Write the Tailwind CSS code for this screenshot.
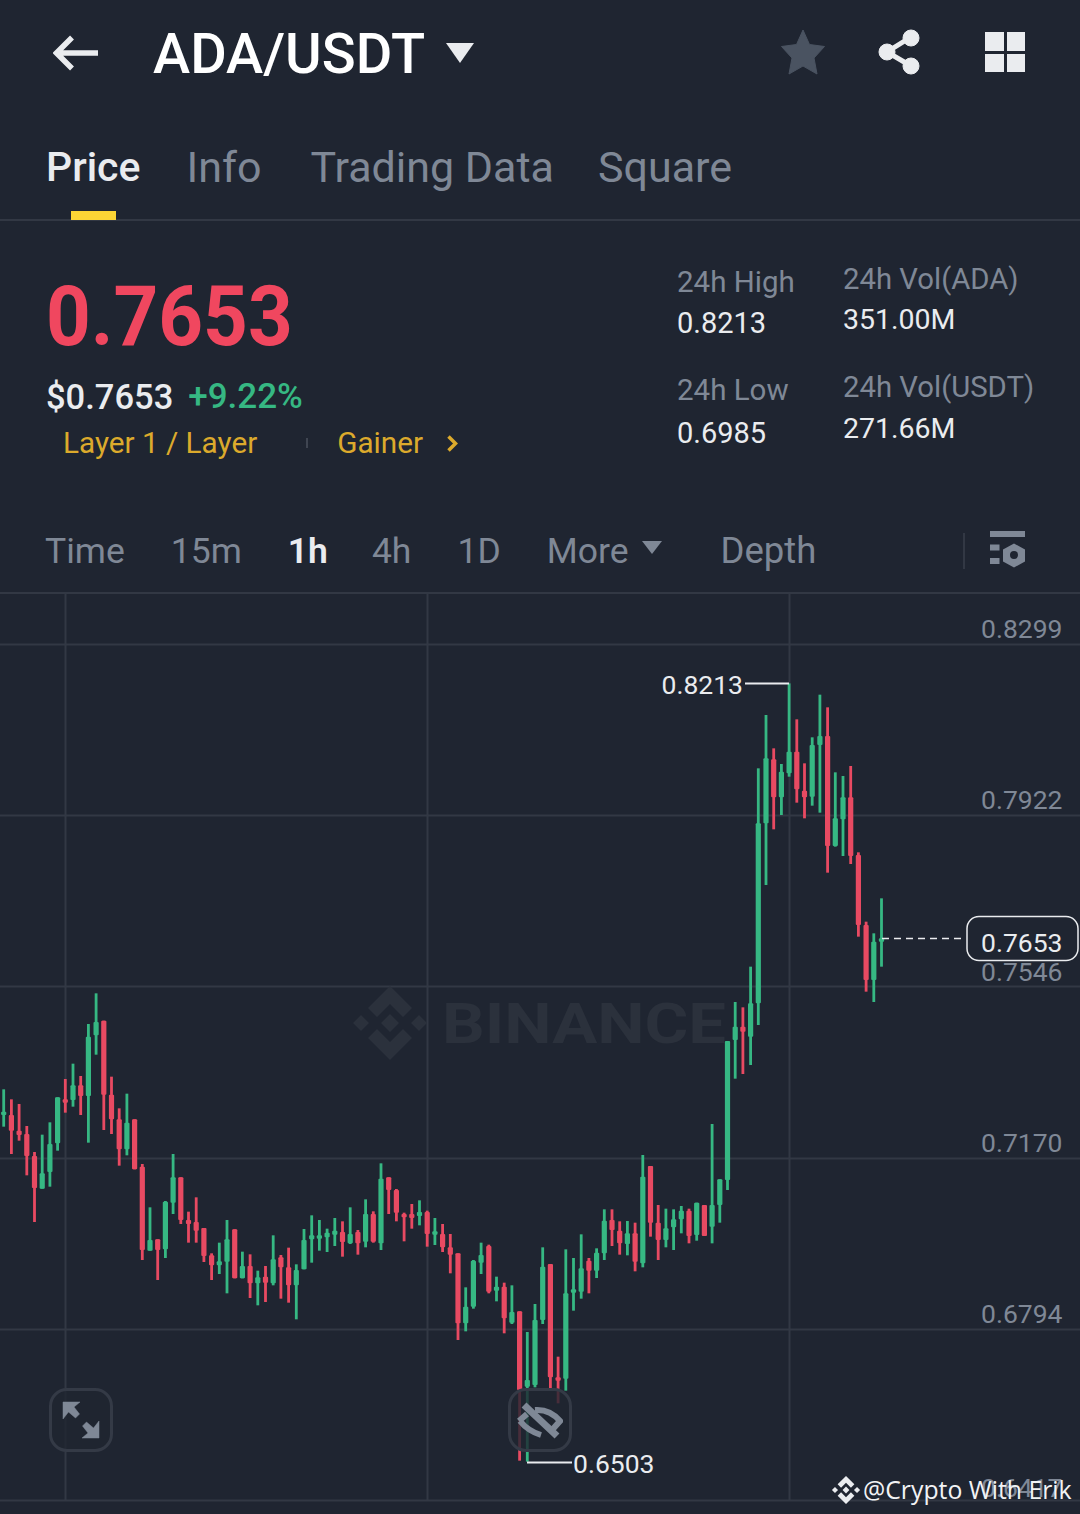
<!DOCTYPE html>
<html lang="en">
<head>
    <meta charset="UTF-8">
    <meta name="viewport" content="width=device-width, initial-scale=1.0">
    <title>ADA/USDT</title>
    <script src="https://cdn.jsdelivr.net/npm/@tailwindcss/browser@4"></script>
</head>
<body class="bg-[#1f2531]">
<div class="w-[1080px] h-[1514px] overflow-hidden bg-[#1f2531] font-['Roboto',sans-serif] text-[#7f8896]">

    <!-- top bar -->
    <header class="h-[105px] flex items-center pl-[53px]">
        <svg width="45" height="36" viewBox="0 0 45 36" fill="none" stroke="#eaecef" stroke-width="5.500"><path d="M45 18H4M19 2.500 3.500 18 19 33.500"/></svg>
        <h1 class="ml-[55px] mt-[3px] text-[56px] leading-none font-medium text-white">ADA/USDT</h1>
        <svg class="ml-[21px]" width="28" height="20" viewBox="0 0 28 20"><path d="M0 0h28L14 20z" fill="#eaecef"/></svg>
        <svg class="ml-[307px] -mt-[1px]" width="44" height="46" viewBox="0 0 44 46"><path d="M22 1 28.500 15.500 43.500 17.500 33 29 36 45 22 37 8 45 11 29 .5 17.500 15.500 15.500z" fill="#4a5361" stroke="#4a5361" stroke-linejoin="round"/></svg>
        <svg class="ml-[53px] -mt-[1px]" width="42" height="46" viewBox="0 0 42 46" fill="#eaecef" stroke="#eaecef"><path d="M33 8 9 23l24 14" fill="none" stroke-width="5"/><circle cx="33" cy="9" r="8"/><circle cx="9" cy="23" r="8"/><circle cx="33" cy="37" r="8"/></svg>
        <div class="ml-[65px] -mt-[1px] grid grid-cols-2 gap-[3px] w-[40px] h-[40px]">
            <div class="bg-[#eaecef]"></div><div class="bg-[#eaecef]"></div>
            <div class="bg-[#eaecef]"></div><div class="bg-[#eaecef]"></div>
        </div>
    </header>

    <!-- tabs -->
    <nav class="h-[116px] border-b-2 border-[#323844] flex pl-[46px] gap-[46px] text-[43px] leading-[48px] pt-[38px] relative">
        <a class="relative text-[#eaecef] font-medium text-[41px]">Price<span class="absolute left-[25px] top-[68px] w-[45px] h-[9px] bg-[#fcd535]"></span></a>
        <a>Info</a>
        <a class="ml-[3px]">Trading Data</a>
        <a class="-ml-[2px]">Square</a>
    </nav>

    <!-- price and 24h stats -->
    <section class="h-[284px] flex">
        <div class="w-[677px] pl-[46px]">
            <div class="mt-[56px] text-[84px] leading-[80px] font-bold text-[#f0475f] origin-left scale-x-[.93]">0.7653</div>
            <div class="mt-[20px] flex items-center text-[34.500px] leading-[40px] font-medium">
                <span class="text-[#eaecef]">$0.7653</span>
                <span class="ml-[15px] text-[#36b883] text-[35px]">+9.22%</span>
            </div>
            <div class="mt-[8px] ml-[17px] flex items-center text-[29.700px] leading-[36px] text-[#dcaa2c]">
                <span>Layer 1 / Layer</span>
                <span class="ml-[49px] w-[2px] h-[10px] bg-[#3f4551]"></span>
                <span class="ml-[29px]">Gainer</span>
                <svg class="ml-[24px]" width="11" height="17" viewBox="0 0 11 17" fill="none" stroke="#dcaa2c" stroke-width="3.500"><path d="m1.500 1.500 7 7-7 7"/></svg>
            </div>
        </div>
        <div class="w-[166px] pt-[43px] text-[29.500px] leading-[36px]">
            <div>24h High</div>
            <div class="mt-[5px] text-[#eaecef] text-[29px]">0.8213</div>
            <div class="mt-[31px]">24h Low</div>
            <div class="mt-[7px] text-[#eaecef] text-[29px]">0.6985</div>
        </div>
        <div class="pt-[40px] text-[29.300px] leading-[36px]">
            <div>24h Vol(ADA)</div>
            <div class="mt-[5px] text-[#eaecef] text-[28.500px]">351.00M</div>
            <div class="mt-[31px]">24h Vol(USDT)</div>
            <div class="mt-[6px] text-[#eaecef] text-[28.500px]">271.66M</div>
        </div>
    </section>

    <!-- intervals -->
    <div class="h-[89px] border-b-2 border-[#323844] flex items-center pl-[45px] pt-[6px] text-[35.500px] leading-none">
        <span>Time</span>
        <span class="ml-[46px]">15m</span>
        <span class="ml-[46px] font-semibold text-[#eaecef]">1h</span>
        <span class="ml-[44px]">4h</span>
        <span class="ml-[46px]">1D</span>
        <span class="ml-[46px]">More</span>
        <svg class="ml-[14px] -mt-[9px]" width="20" height="13" viewBox="0 0 20 13"><path d="M0 0h20L10 13z" fill="#7f8896"/></svg>
        <span class="ml-[58px] text-[36.500px]">Depth</span>
        <span class="ml-[147px] -mt-[2px] w-[2px] h-[36px] bg-[#323844]"></span>
        <svg class="ml-[24px] -mt-[4px]" width="38" height="37" viewBox="990 530 38 37" fill="#7f8896">
            <path d="M991 530h35v6h-35zM991 543.500h9.500v6H991zM991 557h9.500v6H991z"/>
            <path fill-rule="evenodd" d="m1015 542.500 11 6v12l-11 6-11-6v-12zm0 7.500a4 4 0 1 0 0 8 4 4 0 0 0 0-8z"/>
        </svg>
    </div>

    <!-- chart -->
    <div class="relative h-[920px]">
        <svg id="chart" class="absolute inset-0" width="1080" height="920" viewBox="0 594 1080 920">
            <g stroke="#323844" stroke-width="2">
                <path d="M0 644.500H1080M0 815.500H1080M0 986.500H1080M0 1158.500H1080M0 1329.500H1080M0 1500.500H1080"/>
                <path d="M65.500 594V1500M427.500 594V1500M789.500 594V1500"/>
            </g>
            <!-- big watermark -->
            <g fill="#2b313c">
                <g transform="translate(390 1023)">
                    <path d="M0-37 22-15 13-6 0-19-13-6-22-15zM0 37-22 15-13 6 0 19 13 6 22 15zM-29-8-21 0-29 8-37 0zM29-8 37 0 29 8 21 0zM0-9 9 0 0 9-9 0z"/>
                </g>
                <text x="442" y="1043" font-size="56" font-weight="700" textLength="284" lengthAdjust="spacingAndGlyphs">BINANCE</text>
            </g>
            <g id="candles"></g>
            <!-- axis labels -->
            <g fill="#7f8896" font-size="26.500" text-anchor="end">
                <text x="1062.500" y="638">0.8299</text>
                <text x="1062.500" y="809">0.7922</text>
                <text x="1062.500" y="981">0.7546</text>
                <text x="1062.500" y="1152">0.7170</text>
                <text x="1062.500" y="1323">0.6794</text>
                <text x="1062.500" y="1497">0.6417</text>
            </g>
            <!-- high, low -->
            <g stroke="#eaecef" stroke-width="2" fill="none">
                <path d="M745 683.500H789M527 1462.500H572"/>
                <path d="M882 938.500H963" stroke-dasharray="7 5" stroke-width="1.500"/>
            </g>
            <g fill="#eaecef" font-size="26.500">
                <text x="661.500" y="694">0.8213</text>
                <text x="573" y="1473">0.6503</text>
            </g>
            <!-- last price -->
            <rect x="967" y="916.500" width="111" height="44" rx="12" fill="#1f2531" stroke="#eaecef" stroke-width="1.500"/>
            <text x="1062.500" y="952" fill="#eaecef" font-size="26.500" text-anchor="end">0.7653</text>
            <!-- small credit -->
            <g transform="translate(846 1490) scale(.38)" fill="#eaecef"><path d="M0-37 22-15 13-6 0-19-13-6-22-15zM0 37-22 15-13 6 0 19 13 6 22 15zM-29-8-21 0-29 8-37 0zM29-8 37 0 29 8 21 0zM0-9 9 0 0 9-9 0z"/></g>
            <text x="863" y="1499" fill="#f2f3f5" font-size="24.800" class="font-['Open_Sans',sans-serif]">@Crypto With Erik</text>
        </svg>

        <!-- buttons over the chart -->
        <button class="absolute left-[49px] top-[794px] w-[64px] h-[64px] rounded-[18px] border-[3px] border-[#343a46] bg-[#1f2531]/80 flex items-center justify-center">
            <svg width="38" height="38" viewBox="62 1401 38 38" fill="#7f8896" stroke="#7f8896"><path d="M63 1402h17l-6 5 5.500 7-4 4-7-6-5.500 7zM99 1438H82l6-5-5.500-7 4-4 7 6 5.500-7z" stroke-width=".5"/></svg>
        </button>
        <button class="absolute left-[508px] top-[794px] w-[64px] h-[64px] rounded-[18px] border-[3px] border-[#343a46] bg-[#1f2531]/80 flex items-center justify-center">
            <svg width="46" height="38" viewBox="517 1401 46 38" fill="none" stroke="#7f8896" stroke-width="6"><path d="m524 1405 33 31" stroke-width="7"/><path d="M535 1410q15-1 25 11l-8 9"/><path d="M519 1421l8-7M520 1421q8 10 21 14"/></svg>
        </button>
    </div>
</div>

<script>
    // [up, wick top, wick bottom, body top, body bottom], y read off crops starting at `base`, 3 units per px
    const G = 1, R = 0;
    const groups = [
        [980, [
            [G,328,440,395,405],[R,358,522,405,452],[R,372,482,452,465],[R,438,586,462,528],[R,516,726,528,624],
            [G,464,626,580,626],[G,427,620,492,576],[G,352,512,352,490],[R,297,398,358,368],[G,251,380,316,360],
            [R,288,405,316,348],[G,132,488,170,348],[G,40,224,126,166],[R,122,450,122,344],[R,290,462,344,418],
            [R,385,557,418,508],[G,341,526,428,508],[R,418,568,418,568],[R,552,840,560,810],[G,682,812,780,812],
            [R,778,900,778,810],[G,663,834,665,808],[G,522,702,592,668],[R,592,732,592,720],[R,695,788,720,732],
            [R,652,788,726,752],[R,744,846,744,828],[R,820,900,826,856],[G,788,882,844,856],[G,720,940,778,845],
            [R,748,895,748,895],[G,815,895,858,895],[R,823,954,858,910],[G,872,976,892,910],[R,858,966,890,908],
            [G,766,916,838,910],[R,825,956,832,862],[R,803,968,862,916],[G,853,1018,870,916],[G,747,868,780,868],
            [G,706,848,766,778],[G,720,812,766,776],[G,746,816,758,772],[G,714,798,752,764],[R,724,830,756,786],
            [G,682,792,762,790],[R,750,824,756,790]
        ]],
        [1140, [
            [G,178,322,222,305],[R,214,308,222,305],[G,70,330,116,310],[R,112,222,112,150],[R,147,244,150,218],
            [R,218,304,222,232],[R,192,266,222,234],[G,181,256,216,228],[R,212,320,216,282],[G,234,315,274,284],
            [R,252,336,282,322],[R,282,400,322,344],[R,340,600,340,550],[G,442,574,500,550],[G,360,506,362,500],
            [G,308,402,345,368],[R,314,460,318,455],[G,410,484,440,452],[R,428,580,440,535],[G,436,552,516,548],
            [R,514,962,514,750],[G,576,965,720,740],[G,492,742,540,735],[G,322,552,380,540],[R,372,745,372,712],
            [R,650,790,712,722],[G,328,752,460,716],[G,354,512,448,458],[G,283,476,385,455],[R,354,460,362,392],
            [G,325,414,338,392],[G,208,360,242,340],[R,208,318,240,270],[R,244,344,272,310],[G,243,346,280,312],
            [R,248,394,280,365],[G,45,382,110,370],[R,78,290,78,248],[R,195,360,248,300],[G,206,322,265,300],
            [G,208,330,238,262],[G,198,280,212,238],[R,206,310,212,288],[G,188,302,188,285]
        ]],
        [990, [
            [R,645,738,645,738],[G,402,760,645,710],[G,568,698,568,645],[G,153,600,153,570],[G,36,266,110,150],
            [R,52,252,110,125]
        ]],
        [660, [
            [G,920,1215,1030,1130],[G,325,1095,490,1030],[G,165,675,295,490],[R,265,508,298,412],[G,312,465,335,412],
            [G,70,350,275,340],[R,178,428,275,388],[R,310,475,392,412],[G,232,437,255,410],[G,104,458,228,255],
            [R,142,638,228,558],[G,337,560,475,558],[G,348,588,412,478],[R,318,612,412,588],[R,577,830,585,795],
            [R,785,995,795,960],[G,820,1026,845,960],[G,715,920,835,845]
        ]]
    ];

    let html = "";
    let i = 0;
    groups.forEach(([base, rows]) => {
        rows.forEach(([up, hi, lo, top, bottom]) => {
            const x = 3.7 + 7.7 * i;
            const fill = up ? "#36b883" : "#e84a62";
            const y = v => base + v / 3;
            html += `<rect x="${x - 1.4}" y="${y(hi)}" width="2.8" height="${(lo - hi) / 3}" fill="${fill}"/>`;
            html += `<rect x="${x - 2.6}" y="${y(top)}" width="5.2" height="${Math.max((bottom - top) / 3, 2)}" rx="1" fill="${fill}"/>`;
            i++;
        });
    });
    document.getElementById("candles").innerHTML = html;
</script>
</body>
</html>
